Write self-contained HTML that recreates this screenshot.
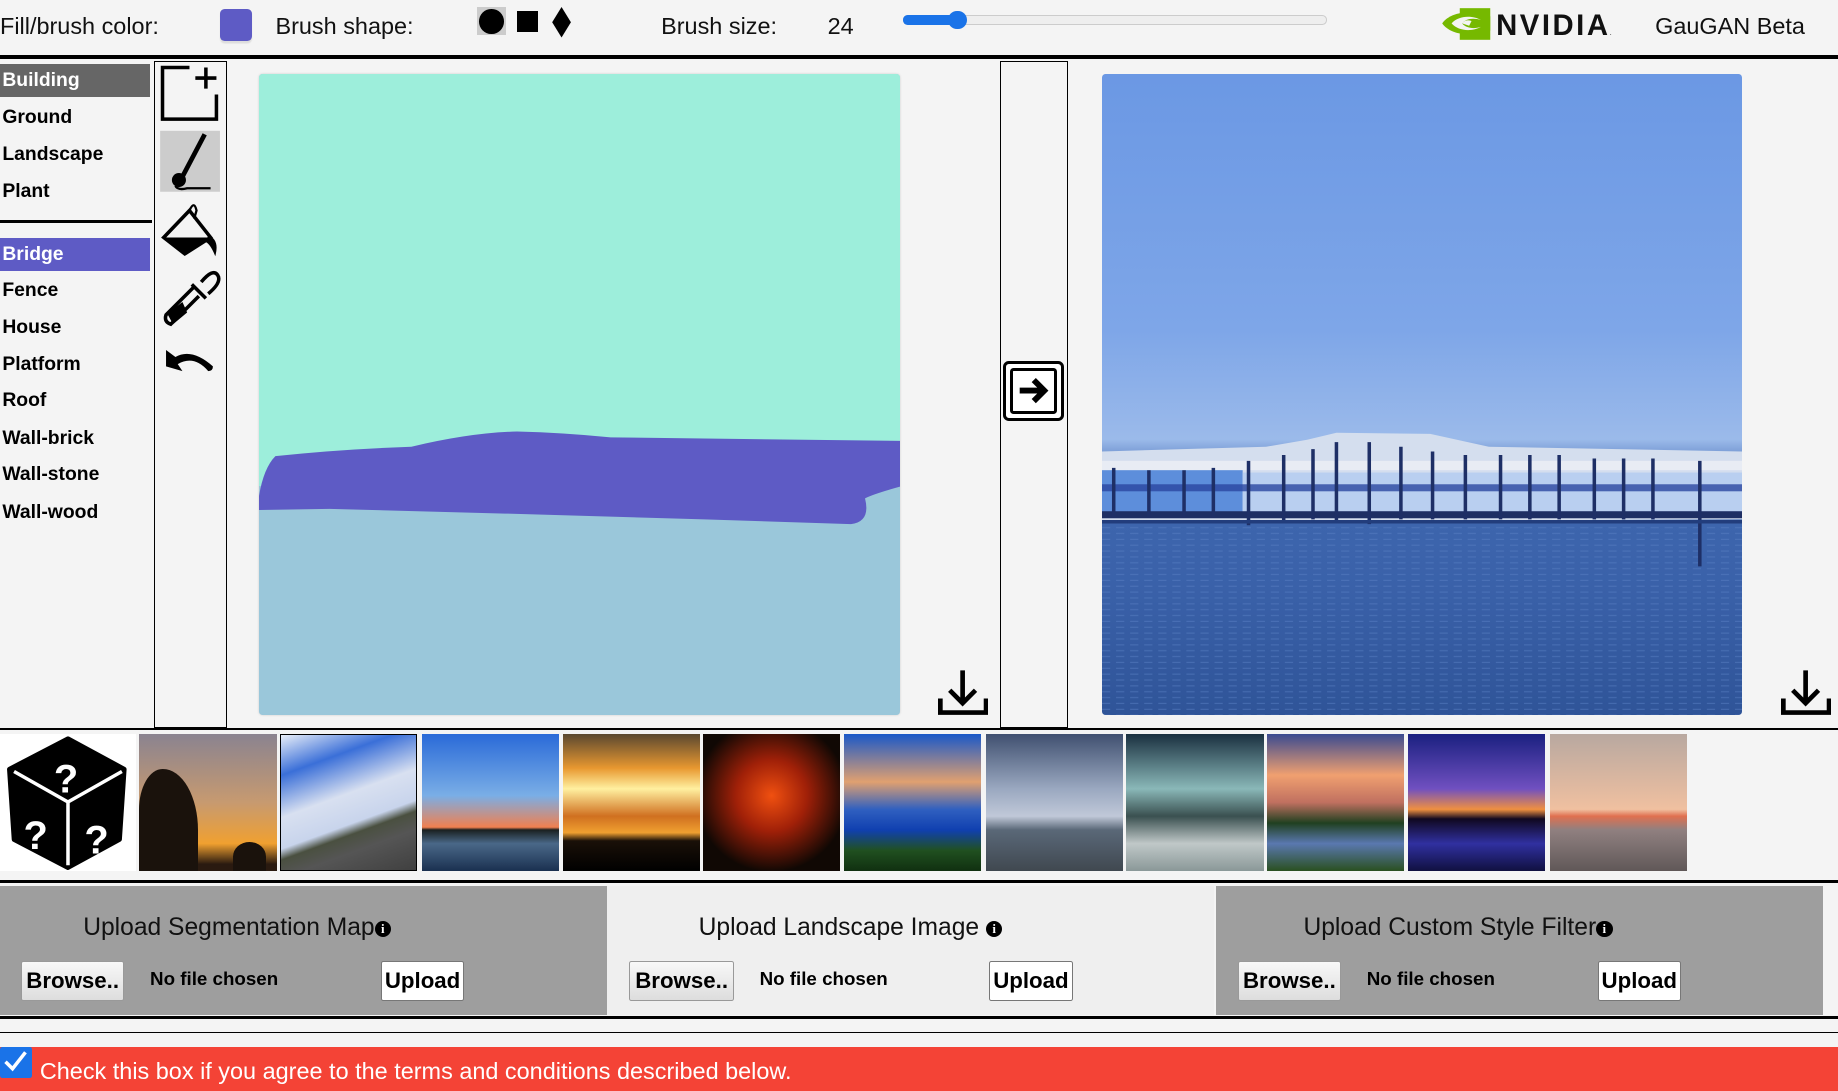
<!DOCTYPE html>
<html><head><meta charset="utf-8"><style>
*{margin:0;padding:0;box-sizing:border-box}
html,body{width:1838px;height:1091px;overflow:hidden;background:#f4f4f4}
#w{zoom:1.17219;position:relative;width:1568px;height:931px;font-family:"Liberation Sans",sans-serif;color:#000}
.a{position:absolute}
.ht{position:absolute;top:10px;font-size:20px;line-height:24px;color:#111}
.li{position:absolute;left:0;width:128px;height:28px;font-weight:bold;font-size:16.5px;line-height:28px;padding-left:2px}
.th{position:absolute;top:626px;width:117px;height:117px}
.pn{position:absolute;top:756px;height:110px;width:518px}
.pt{position:absolute;top:24px;font-size:21px;color:#111}
.btn{position:absolute;top:64px;height:34px;border:1px solid #999;border-radius:2px;background:linear-gradient(#f8f8f8,#ddd);font-size:19px;font-weight:bold;line-height:32px;text-align:center}
.nf{position:absolute;top:70px;font-size:16px;font-weight:bold}
.info{display:inline-block;width:14px;height:14px;border-radius:50%;background:#000;color:#fff;font-size:11px;line-height:14px;text-align:center;font-weight:bold;vertical-align:2px;font-family:"Liberation Serif",serif}
</style></head><body><div id="w">
<div class="ht" style="left:0">Fill/brush color:</div>
<div class="a" style="left:188px;top:8px;width:27px;height:27px;border-radius:4px;background:#5e5bc5;box-shadow:0 2px 1px #ddd"></div>
<div class="ht" style="left:235px">Brush shape:</div>
<div class="a" style="left:407px;top:6px;width:25px;height:24px;background:#ccc"></div>
<div class="a" style="left:409px;top:8px;width:21px;height:21px;border-radius:50%;background:#000"></div>
<div class="a" style="left:441px;top:9px;width:18px;height:18px;background:#000"></div>
<svg class="a" style="left:470px;top:6px" width="18" height="26"><path d="M9 0L17 13L9 26L1 13Z"/></svg>
<div class="ht" style="left:564px">Brush size:</div>
<div class="ht" style="left:706px">24</div>
<div class="a" style="left:770px;top:13px;width:362px;height:8px;border-radius:4px;border:1px solid #ccc;background:#eee"></div>
<div class="a" style="left:770px;top:13px;width:47px;height:8px;border-radius:4px;background:#1a73e8"></div>
<div class="a" style="left:809px;top:9px;width:16px;height:16px;border-radius:50%;background:#1a73e8"></div>
<svg class="a" style="left:1229px;top:6px" width="150" height="30" viewBox="0 0 150 30">
<rect x="16" y="1" width="26" height="27" fill="#76b900"/>
<path d="M1 14C8 4 26 2 42 8V20C26 26 8 24 1 14Z" fill="#76b900"/>
<path d="M9 14C15 7 27 7 34 11C27 9 21 10 18 14C21 18 28 19 34 17C27 21 15 21 9 14Z" fill="#f4f4f4"/>
<path d="M18 14C20 11 24 11 26 12L24 16Z" fill="#f4f4f4"/>
<text x="47" y="24" font-family="Liberation Sans" font-weight="bold" font-size="25" fill="#111" letter-spacing="0.5" textLength="96">NVIDIA</text>
<text x="144" y="24" font-size="6" fill="#111">.</text></svg>
<div class="ht" style="left:1412px">GauGAN Beta</div>
<div class="a" style="left:0;top:47px;width:1568px;height:3px;background:#000"></div>
<div class="li" style="top:55px;background:#666;color:#fff">Building</div>
<div class="li" style="top:86px">Ground</div>
<div class="li" style="top:118px">Landscape</div>
<div class="li" style="top:149px">Plant</div>
<div class="a" style="left:0;top:188px;width:130px;height:2px;background:#000"></div>
<div class="li" style="top:203px;background:#5e5bc5;color:#fff">Bridge</div>
<div class="li" style="top:234px">Fence</div>
<div class="li" style="top:265px">House</div>
<div class="li" style="top:297px">Platform</div>
<div class="li" style="top:328px">Roof</div>
<div class="li" style="top:360px">Wall-brick</div>
<div class="li" style="top:391px">Wall-stone</div>
<div class="li" style="top:423px">Wall-wood</div>
<div class="a" style="left:131px;top:52px;width:63px;height:569px;border:1px solid #000"></div>
<svg class="a" style="left:136px;top:55px" width="54" height="290" viewBox="0 0 54 290">
<path d="M26 3H3V47H49V26" fill="none" stroke="#000" stroke-width="3"/>
<path d="M40 3V21M31 12H49" stroke="#000" stroke-width="3"/>
<rect x="1" y="57" width="51" height="52" fill="#ccc"/>
<path d="M39 60L19 98" stroke="#000" stroke-width="4"/>
<circle cx="17" cy="99" r="6"/><path d="M14 104Q16 108 24 106H44" fill="none" stroke="#000" stroke-width="2"/>
<path d="M26 125L4 148L22 162L44 148Z" fill="none" stroke="#000" stroke-width="3"/>
<path d="M5 148H43L23 163Z"/><path d="M26 125Q30 116 32 125L30 132" fill="none" stroke="#000" stroke-width="2"/>
<path d="M42 146Q52 150 48 164Q44 154 40 152Z"/>
<path d="M30 190L6 214Q4 220 10 222L34 198" fill="none" stroke="#000" stroke-width="3"/>
<path d="M7 213L20 203L24 212L12 222Z"/>
<path d="M28 188L40 200M36 186Q46 174 50 180Q54 186 42 196" fill="none" stroke="#000" stroke-width="3"/>
<path d="M6 258L6 244L14 250Q28 242 46 258Q46 262 42 262Q30 248 16 256L20 262Z"/>
</svg>
<div class="a" style="left:221px;top:63px;width:547px;height:547px;background:#9ac7da;overflow:hidden;border-radius:3px;box-shadow:0 0 2px #ccc">
<div class="a" style="left:0;top:0;width:547px;height:352px;background:#9deedb"></div>
<svg class="a" style="left:0;top:0" width="547" height="547"><path d="M0 360Q4 336 14 326Q70 320 130 318Q180 306 220 305Q260 306 300 310L547 313L547 352Q525 358 517 362Q522 382 505 384L380 380L210 375L60 371L0 372Z" fill="#5e5bc5"/></svg>
</div>
<svg class="a" style="left:800px;top:570px" width="43" height="41"><path d="M21 2V30M10 19L21 30L32 19" fill="none" stroke="#000" stroke-width="4"/><path d="M2 26V38H41V26" fill="none" stroke="#000" stroke-width="4"/></svg>
<div class="a" style="left:853px;top:52px;width:58px;height:569px;border:1px solid #000"></div>
<div class="a" style="left:856px;top:308px;width:52px;height:51px;border:3px solid #000;border-radius:5px;background:#fff"></div>
<div class="a" style="left:862px;top:314px;width:40px;height:39px;border:3px solid #000;border-radius:3px"></div>
<svg class="a" style="left:866px;top:318px" width="32" height="31"><path d="M4 15H24M16 6L25 15L16 24" fill="none" stroke="#000" stroke-width="5"/></svg>
<div class="a" style="left:940px;top:63px;width:546px;height:547px;overflow:hidden;border-radius:3px;background:linear-gradient(#6b98e4 0%,#7ea6e8 40%,#9bbaea 57%,#3f68b0 63%,#3a61a9 80%,#2f5498 100%)">
<svg class="a" style="left:0;top:0" width="546" height="547">
<defs><pattern id="wv" width="12" height="5" patternUnits="userSpaceOnUse"><path d="M0 2H7" stroke="#5a80c4" stroke-width="1" opacity=".5"/></pattern></defs>
<rect x="0" y="385" width="546" height="162" fill="url(#wv)"/>
<path d="M0 322L140 318L175 312L200 306L280 307L330 318L546 322L546 380L0 382Z" fill="#d4deee"/>
<rect x="0" y="330" width="546" height="8" fill="#e8ecf4"/>
<rect x="0" y="338" width="120" height="36" fill="#5d8edb"/>
<rect x="120" y="340" width="426" height="38" fill="#b9cff0"/>
<rect x="0" y="350" width="546" height="6" fill="#2a46a0" opacity=".8"/>
<rect x="0" y="373" width="546" height="6" fill="#1e2f64"/>
<g stroke="#1e2f66" stroke-width="3">
<path d="M10 336V378M40 338V378M70 338V378M95 336V378M125 330V385M155 325V382M180 320V380M200 314V382M228 314V384M255 318V380M282 322V380M310 325V380M340 325V380M365 325V380M390 325V380M420 328V380M445 328V380M470 328V380M510 330V420"/></g>
<path d="M0 382H546" stroke="#223d7c" stroke-width="3"/>
</svg></div>
<svg class="a" style="left:1519px;top:570px" width="43" height="41"><path d="M21 2V30M10 19L21 30L32 19" fill="none" stroke="#000" stroke-width="4"/><path d="M2 26V38H41V26" fill="none" stroke="#000" stroke-width="4"/></svg>
<div class="a" style="left:0;top:621px;width:1568px;height:2px;background:#000"></div>
<div class="th" style="left:0;width:116px;background:#fff"><svg width="116" height="117" viewBox="0 0 116 117">
<path d="M58 4L106 30L102 90L58 114L12 90L8 30Z" fill="#000" stroke="#000" stroke-width="4" stroke-linejoin="round"/>
<path d="M58 58L58 112M58 58L12 32M58 58L104 32" stroke="#fff" stroke-width="3"/>
<text x="46" y="50" fill="#fff" font-size="34" font-weight="bold" font-family="Liberation Sans">?</text>
<text x="20" y="98" fill="#fff" font-size="34" font-weight="bold" font-family="Liberation Sans">?</text>
<text x="72" y="102" fill="#fff" font-size="34" font-weight="bold" font-family="Liberation Sans">?</text></svg></div>
<div class="th" style="left:119px;background:linear-gradient(#8a8390,#c79a70 50%,#f0a030 80%,#2a1a10 95%)"><div class="a" style="left:0;top:30px;width:50px;height:87px;background:#1a120c;border-radius:40% 60% 0 0"></div><div class="a" style="left:80px;top:92px;width:28px;height:25px;background:#1a120c;border-radius:50% 50% 0 0"></div></div>
<div class="th" style="left:239px;border:1px solid #000;background:linear-gradient(160deg,#e8eef8 0%,#3a6fd8 22%,#d8e0f0 45%,#c8d4ec 62%,#4a5040 68%,#555 78%,#404040 100%)"></div>
<div class="th" style="left:360px;background:linear-gradient(#2a6ad8,#7aaee6 45%,#f08050 68%,#1a2020 70%,#4a6888 80%,#1a3050)"></div>
<div class="th" style="left:480px;background:linear-gradient(#5a4830,#e89830 25%,#fff0a0 40%,#d07020 60%,#f0a030 72%,#1a1008 78%,#000)"></div>
<div class="th" style="left:600px;background:radial-gradient(circle at 50% 45%,#f05010,#a02008 35%,#100804 75%)"></div>
<div class="th" style="left:720px;background:linear-gradient(#1a58c8,#e0a070 35%,#3060c0 55%,#1040b0 70%,#205020 85%,#103010)"></div>
<div class="th" style="left:841px;background:linear-gradient(#405070,#9aa8c0 40%,#c0c8d8 60%,#5a6878 70%,#404850)"></div>
<div class="th" style="left:961px;background:linear-gradient(#1a3040,#8ab8b8 40%,#3a5050 60%,#c0c8c8 80%,#8a9898)"></div>
<div class="th" style="left:1081px;background:linear-gradient(#3a4a90,#f0a070 30%,#c07060 50%,#204020 65%,#5a78b0 80%,#2a5020)"></div>
<div class="th" style="left:1201px;background:linear-gradient(#1a2080,#7050c0 40%,#f09040 55%,#100820 62%,#3030a0 80%,#101040)"></div>
<div class="th" style="left:1322px;background:linear-gradient(#b8a8a0,#f0c0a0 55%,#e07050 60%,#908080 70%,#605858)"></div>
<div class="a" style="left:0;top:751px;width:1568px;height:2px;background:#000"></div>
<div class="pn" style="left:0;background:#9e9e9e"><div class="pt" style="left:71px">Upload Segmentation Map<span class="info">i</span></div>
<div class="btn" style="left:18px;width:88px">Browse..</div><div class="nf" style="left:128px">No file chosen</div><div class="btn" style="left:325px;width:71px;background:#fff;border-color:#777">Upload</div></div>
<div class="pn" style="left:518px;background:#efefef"><div class="pt" style="left:78px">Upload Landscape Image <span class="info">i</span></div>
<div class="btn" style="left:19px;width:89px">Browse..</div><div class="nf" style="left:130px">No file chosen</div><div class="btn" style="left:326px;width:71px;background:#fff;border-color:#777">Upload</div></div>
<div class="pn" style="left:1037px;background:#9e9e9e"><div class="pt" style="left:75px">Upload Custom Style Filter<span class="info">i</span></div>
<div class="btn" style="left:19px;width:88px">Browse..</div><div class="nf" style="left:129px">No file chosen</div><div class="btn" style="left:326px;width:71px;background:#fff;border-color:#777">Upload</div></div>
<div class="a" style="left:0;top:867px;width:1568px;height:2px;background:#000"></div>
<div class="a" style="left:0;top:880px;width:1568px;height:1px;background:#000"></div>
<div class="a" style="left:0;top:893px;width:1568px;height:38px;background:#f44336"></div>
<div class="a" style="left:0;top:893px;width:27px;height:27px;background:#1a73e8;border-radius:2px"></div>
<svg class="a" style="left:2px;top:896px" width="23" height="20"><path d="M3 10L9 16L20 2" fill="none" stroke="#fff" stroke-width="3"/></svg>
<div class="a" style="left:34px;top:903px;font-size:20px;color:#fff">Check this box if you agree to the terms and conditions described below.</div>
</div></body></html>
